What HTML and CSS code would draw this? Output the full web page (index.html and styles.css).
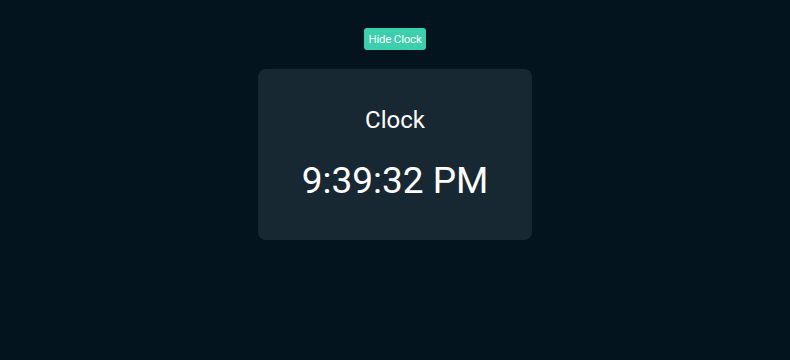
FILE: index.html
```html
<!DOCTYPE html>
<html>
<head>
<meta charset="utf-8">
<link rel="stylesheet" href="styles.css">
</head>
<body>
<div class="app">
  <button class="toggle">Hide Clock</button>
  <div class="card">
    <h2 class="title">Clock</h2>
    <div class="time">9:39:32 PM</div>
  </div>
</div>
</body>
</html>
```
FILE: styles.css
```css
html, body {
  margin: 0;
  padding: 0;
  background: #03141f;
  height: 100%;
}
body {
  font-family: Roboto, "Liberation Sans", sans-serif;
  color: #ffffff;
}
.app {
  display: flex;
  flex-direction: column;
  align-items: center;
  padding-top: 28px;
}
.toggle {
  height: 22px;
  width: 62px;
  padding: 0;
  border: none;
  border-radius: 3px;
  background: #3ccfab;
  color: #ffffff;
  font-family: Roboto, "Liberation Sans", sans-serif;
  font-size: 11.5px;
  font-weight: 400;
  letter-spacing: -0.2px;
  cursor: pointer;
}
.card {
  margin-top: 19px;
  width: 274px;
  height: 171px;
  box-sizing: border-box;
  background: #182833;
  border-radius: 8px;
  display: flex;
  flex-direction: column;
  align-items: center;
  padding-top: 35px;
}
.title {
  margin: 0;
  font-size: 24px;
  font-weight: 400;
  line-height: 32px;
}
.time {
  margin-top: 23px;
  font-size: 37px;
  line-height: 44px;
}
```
